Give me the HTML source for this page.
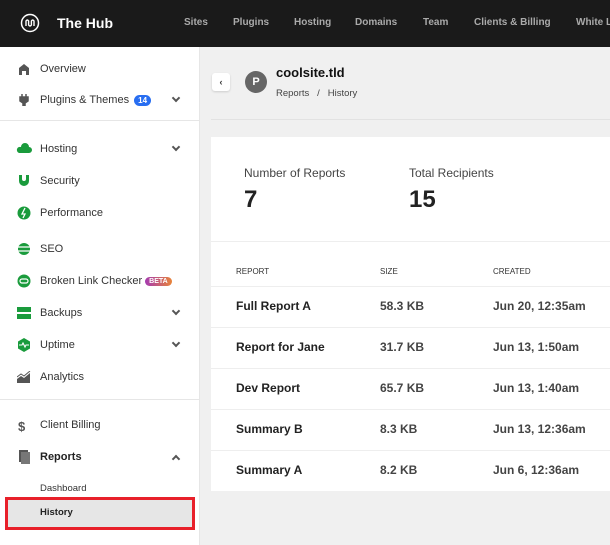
<!DOCTYPE html>
<html><head><meta charset="utf-8"><style>
*{box-sizing:border-box;margin:0;padding:0}
body{width:610px;height:545px;overflow:hidden;font-family:"Liberation Sans",sans-serif;background:#f0f0f0;position:relative;color:#333}
.top{position:absolute;left:0;top:0;width:610px;height:47px;background:#1a1a1a}
.brand{position:absolute;left:57px;top:15px;color:#fff;font-weight:bold;font-size:14px}
.nav{position:absolute;top:17px;color:#aaa;font-size:10px;font-weight:bold;white-space:nowrap}
.side{position:absolute;left:0;top:47px;width:200px;height:498px;background:#fff;border-right:1px solid #e6e6e6}
.it{position:absolute;left:40px;font-size:11px;color:#333;white-space:nowrap}
.ic{position:absolute;left:17px;width:14px;height:12px}
.chev{position:absolute;left:173px;width:6px;height:6px;border-right:2px solid #555;border-bottom:2px solid #555;transform:rotate(45deg)}
.sep{position:absolute;left:0;width:199px;height:1px;background:#e6e6e6}
.card{position:absolute;left:211px;top:137px;width:399px;height:354px;background:#fff}
.row{position:absolute;left:0;width:399px;height:1px;background:#eee}
.cell{position:absolute;font-size:12px;font-weight:bold;white-space:nowrap}
.th{position:absolute;top:130px;font-size:8px;color:#333}
</style></head><body>
<div class="top">
<svg width="20" height="20" viewBox="0 0 20 20" style="position:absolute;left:20px;top:13px"><circle cx="10" cy="10" r="8.5" stroke="#fff" stroke-width="1.5" fill="none"/><path d="M6 13V8q1.3-2 2.6 0v4q1.4 2 2.8 0V8q1.3-2 2.6 0v5" stroke="#fff" stroke-width="1.4" fill="none"/></svg>
<div class="brand">The Hub</div>
<div class="nav" style="left:184px">Sites</div>
<div class="nav" style="left:233px">Plugins</div>
<div class="nav" style="left:294px">Hosting</div>
<div class="nav" style="left:355px">Domains</div>
<div class="nav" style="left:423px">Team</div>
<div class="nav" style="left:474px">Clients &amp; Billing</div>
<div class="nav" style="left:576px">White L</div>
</div>
<div class="side">
<svg class="ic" style="top:16px" viewBox="0 0 14 12"><path d="M2 12V5l5-4 5 4v7H9V8H5v4z" fill="#555"/></svg>
<div class="it" style="top:16px">Overview</div>
<svg class="ic" style="top:47px" viewBox="0 0 14 12"><path d="M5 0v3M9 0v3M3 3h8v4l-3 2v3H6V9L3 7z" stroke="#555" stroke-width="1.5" fill="#555"/></svg>
<div class="it" style="top:47px">Plugins &amp; Themes <span style="display:inline-block;background:#286ef1;color:#fff;font-size:8px;font-weight:bold;border-radius:7px;padding:1px 4px;margin-left:2px;vertical-align:middle">14</span></div>
<div class="chev" style="top:48px"></div>
<div class="sep" style="top:73px"></div>
<svg class="ic" style="top:96px;width:16px;left:16px" viewBox="0 0 16 12"><path d="M3 10h10a3 3 0 0 0 0-6 4 4 0 0 0-8-0 3 3 0 0 0-2 6z" fill="#1a9b3c"/></svg>
<div class="it" style="top:96px">Hosting</div><div class="chev" style="top:97px"></div>
<svg class="ic" style="top:128px" viewBox="0 0 14 12"><path d="M2 0h3v4a2 2 0 0 0 4 0V0h3v6a5 5 0 0 1-10 0z" fill="#1a9b3c"/></svg>
<div class="it" style="top:128px">Security</div>
<svg class="ic" style="top:159px;height:14px" viewBox="0 0 14 14"><circle cx="7" cy="7" r="6.5" fill="#1a9b3c"/><path d="M8 2L5 8h3l-2 4" stroke="#fff" stroke-width="1.3" fill="none"/></svg>
<div class="it" style="top:160px">Performance</div>
<svg class="ic" style="top:195px;height:14px" viewBox="0 0 14 14"><circle cx="7" cy="7" r="6" fill="#1a9b3c"/><path d="M0 5h14M0 9h14" stroke="#fff" stroke-width="1.2"/></svg>
<div class="it" style="top:196px">SEO</div>
<svg class="ic" style="top:227px;height:14px" viewBox="0 0 14 14"><circle cx="7" cy="7" r="6.5" fill="#1a9b3c"/><rect x="3" y="5" width="8" height="4" rx="2" stroke="#fff" stroke-width="1.2" fill="none"/></svg>
<div class="it" style="top:228px">Broken Link Checker <span style="display:inline-block;background:linear-gradient(90deg,#a53ab1,#e8843a);color:#fff;font-size:7px;font-weight:bold;border-radius:6px;padding:1px 4px;vertical-align:1px">BETA</span></div>
<svg class="ic" style="top:260px" viewBox="0 0 14 12"><rect x="0" y="0" width="14" height="5" fill="#1a9b3c"/><rect x="0" y="7" width="14" height="5" fill="#1a9b3c"/></svg>
<div class="it" style="top:260px">Backups</div><div class="chev" style="top:261px"></div>
<svg class="ic" style="top:291px;height:14px" viewBox="0 0 14 14"><path d="M7 0l6 3.5v7L7 14 1 10.5v-7z" fill="#1a9b3c"/><path d="M2 7h3l1-2 2 4 1-2h3" stroke="#fff" stroke-width="1.1" fill="none"/></svg>
<div class="it" style="top:292px">Uptime</div><div class="chev" style="top:293px"></div>
<svg class="ic" style="top:324px" viewBox="0 0 14 12"><path d="M0 12V8l4-3 3 2 6-5v10z" fill="#555"/><path d="M0 6l4-3 3 2 6-5" stroke="#555" stroke-width="1" fill="none"/></svg>
<div class="it" style="top:324px">Analytics</div>
<div class="sep" style="top:352px"></div>
<div class="it" style="top:372px;left:18px;font-weight:bold;font-size:13px;color:#555">$</div>
<div class="it" style="top:372px">Client Billing</div>
<svg class="ic" style="top:403px;height:14px" viewBox="0 0 14 14"><rect x="2" y="0" width="9" height="12" fill="#555"/><rect x="4" y="2" width="9" height="12" fill="#777"/></svg>
<div class="it" style="top:404px;font-weight:bold;color:#222">Reports</div>
<div class="chev" style="top:409px;transform:rotate(225deg)"></div>
<div class="it" style="top:436px;font-size:9.5px">Dashboard</div>
<div style="position:absolute;left:5px;top:450px;width:190px;height:33px;border:3px solid #e8202a;background:#e6e6e6"></div>
<div class="it" style="top:460px;font-size:9.5px;font-weight:bold;color:#222">History</div>
</div>
<div style="position:absolute;left:212px;top:73px;width:18px;height:18px;background:#fff;border-radius:3px;box-shadow:0 1px 2px rgba(0,0,0,.15);font-size:9px;font-weight:bold;text-align:center;line-height:18px">‹</div>
<div style="position:absolute;left:245px;top:71px;width:22px;height:22px;border-radius:50%;background:#666;color:#fff;font-size:11px;font-weight:bold;text-align:center;line-height:22px">P</div>
<div style="position:absolute;left:276px;top:65px;font-size:13px;font-weight:bold;color:#111">coolsite.tld</div>
<div style="position:absolute;left:276px;top:88px;font-size:9.5px;color:#444">Reports &nbsp; / &nbsp; History</div>
<div style="position:absolute;left:211px;top:119px;width:399px;height:1px;background:#e2e2e2"></div>
<div class="card">
<div style="position:absolute;left:33px;top:29px;font-size:12px;color:#444">Number of Reports</div>
<div style="position:absolute;left:33px;top:49px;font-size:24px;font-weight:bold;color:#222">7</div>
<div style="position:absolute;left:198px;top:29px;font-size:12px;color:#444">Total Recipients</div>
<div style="position:absolute;left:198px;top:49px;font-size:24px;font-weight:bold;color:#222">15</div>
<div class="row" style="top:104px"></div>
<div class="th" style="left:25px">REPORT</div><div class="th" style="left:169px">SIZE</div><div class="th" style="left:282px">CREATED</div>
<div class="row" style="top:149px"></div>
<div class="cell" style="left:25px;top:162px;color:#222">Full Report A</div><div class="cell" style="left:169px;top:162px;color:#444">58.3 KB</div><div class="cell" style="left:282px;top:162px;color:#444">Jun 20, 12:35am</div>
<div class="row" style="top:190px"></div>
<div class="cell" style="left:25px;top:203px;color:#222">Report for Jane</div><div class="cell" style="left:169px;top:203px;color:#444">31.7 KB</div><div class="cell" style="left:282px;top:203px;color:#444">Jun 13, 1:50am</div>
<div class="row" style="top:231px"></div>
<div class="cell" style="left:25px;top:244px;color:#222">Dev Report</div><div class="cell" style="left:169px;top:244px;color:#444">65.7 KB</div><div class="cell" style="left:282px;top:244px;color:#444">Jun 13, 1:40am</div>
<div class="row" style="top:272px"></div>
<div class="cell" style="left:25px;top:285px;color:#222">Summary B</div><div class="cell" style="left:169px;top:285px;color:#444">8.3 KB</div><div class="cell" style="left:282px;top:285px;color:#444">Jun 13, 12:36am</div>
<div class="row" style="top:313px"></div>
<div class="cell" style="left:25px;top:326px;color:#222">Summary A</div><div class="cell" style="left:169px;top:326px;color:#444">8.2 KB</div><div class="cell" style="left:282px;top:326px;color:#444">Jun 6, 12:36am</div>
</div>
</body></html>
